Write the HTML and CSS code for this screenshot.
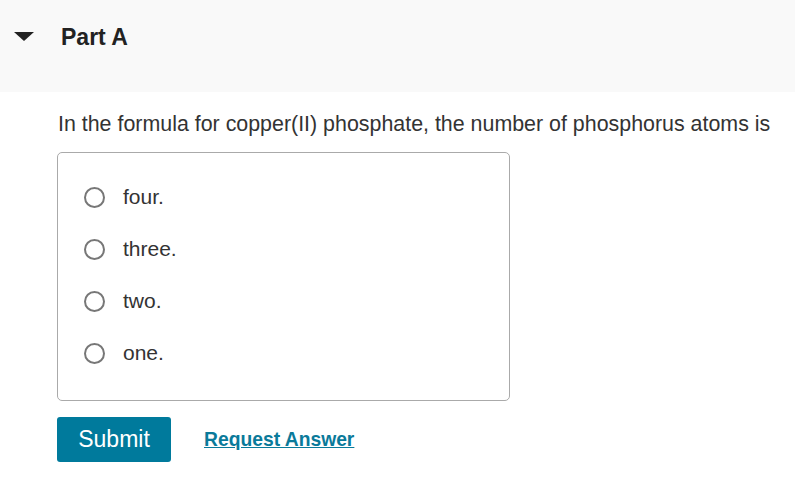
FILE: index.html
```html
<!DOCTYPE html>
<html>
<head>
    <title>Part A</title>
    <link rel="stylesheet" href="styles.css">
</head>
<body>
    <div class="part-header">
        <span class="caret"></span>
        <h2 class="part-title">Part A</h2>
    </div>

    <div class="part-body">
        <p class="question">In the formula for copper(II) phosphate, the number of phosphorus atoms is</p>

        <div class="choices">
            <label class="choice"><span class="radio"></span>four.</label>
            <label class="choice"><span class="radio"></span>three.</label>
            <label class="choice"><span class="radio"></span>two.</label>
            <label class="choice"><span class="radio"></span>one.</label>
        </div>

        <div class="actions">
            <button class="submit-btn">Submit</button>
            <a href="#" class="request-link">Request Answer</a>
        </div>
    </div>
</body>
</html>
```

FILE: styles.css
```css
* {
    box-sizing: border-box;
    margin: 0;
    padding: 0;
}

body {
    font-family: "Liberation Sans", Arial, sans-serif;
    background-color: #ffffff;
    color: #333333;
}

.part-header {
    background-color: #f9f9f9;
    height: 92px;
    display: flex;
    align-items: flex-start;
    padding-top: 24px;
}

.caret {
    width: 0;
    height: 0;
    border-left: 10px solid transparent;
    border-right: 10px solid transparent;
    border-top: 9px solid #222222;
    margin-left: 14px;
    margin-top: 8px;
}

.part-title {
    font-size: 23px;
    font-weight: bold;
    color: #222222;
    margin-left: 27px;
    line-height: 26px;
}

.part-body {
    padding: 20px 0 0 57px;
}

.question {
    font-size: 21.4px;
    line-height: 24px;
    margin-left: 1px;
    color: #333333;
}

.choices {
    width: 453px;
    height: 249px;
    border: 1px solid #aaaaaa;
    border-radius: 5px;
    margin-top: 16px;
    padding: 33px 0 0 26px;
    display: flex;
    flex-direction: column;
    gap: 30px;
}

.choice {
    display: flex;
    align-items: center;
    font-size: 21px;
    line-height: 22px;
    height: 22px;
    color: #333333;
}

.radio {
    width: 21px;
    height: 21px;
    border: 2px solid #777777;
    border-radius: 50%;
    margin-right: 18px;
    flex-shrink: 0;
}

.actions {
    display: flex;
    align-items: center;
    margin-top: 16px;
}

.submit-btn {
    background-color: #007a9c;
    color: #ffffff;
    font-family: "Liberation Sans", Arial, sans-serif;
    font-size: 23px;
    border: none;
    border-radius: 3px;
    width: 114px;
    height: 45px;
}

.request-link {
    color: #0a7a9a;
    font-size: 19.3px;
    font-weight: bold;
    margin-left: 33px;
    text-decoration: underline;
}
```
